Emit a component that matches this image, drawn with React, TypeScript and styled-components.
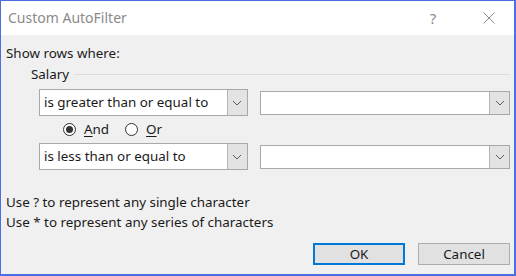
import React from "react";
import styled, { createGlobalStyle } from "styled-components";

const Global = createGlobalStyle`
  html, body { margin: 0; padding: 0; background: #ffffff; }
  * { box-sizing: border-box; }
`;

const Window = styled.div`
  width: 516px;
  height: 276px;
  border: 1px solid #4a6fe3;
  border-right-width: 2px;
  border-bottom-width: 2px;
  display: flex;
  flex-direction: column;
  font-family: "Noto Sans", "Open Sans", sans-serif;
  font-size: 13.4px;
  color: #1a1a1a;
  overflow: hidden;
`;

const TitleBar = styled.div`
  height: 34px;
  background: #ffffff;
  display: flex;
  align-items: center;
  padding-left: 7px;
`;

const Title = styled.div`
  flex: 1;
  font-size: 14px;
  color: #8a8a8a;
  padding-bottom: 2px;
`;

const TitleButton = styled.div<{ $w: number }>`
  width: ${(p) => p.$w}px;
  height: 34px;
  display: flex;
  align-items: center;
  justify-content: center;
  color: #8a8a8a;
  font-size: 15px;
`;

const Body = styled.div`
  flex: 1;
  background: #f0f0f0;
  display: flex;
  flex-direction: column;
  padding: 10px 4px 0 5px;
`;

const Label = styled.div`
  line-height: 16px;
  height: 16px;
`;

const GroupHeader = styled.div`
  display: flex;
  align-items: center;
  margin-top: 5px;
  padding-left: 25px;
  height: 16px;
`;

const GroupLine = styled.div`
  flex: 1;
  height: 1px;
  background: #dcdcdc;
  margin-left: 5px;
`;

const ComboRow = styled.div<{ $top: number }>`
  display: flex;
  align-items: center;
  margin-top: ${(p) => p.$top}px;
  padding-left: 33px;
`;

const Combo = styled.div<{ $w: number; $h: number; $gap?: number }>`
  width: ${(p) => p.$w}px;
  height: ${(p) => p.$h}px;
  margin-left: ${(p) => p.$gap ?? 0}px;
  display: flex;
  background: #ffffff;
  border: 1px solid #a8a8a8;
`;

const ComboText = styled.div`
  flex: 1;
  display: flex;
  align-items: center;
  padding-left: 4px;
  padding-bottom: 1px;
  white-space: nowrap;
  overflow: hidden;
`;

const DropButton = styled.div`
  width: 20px;
  background: #e3e3e3;
  border-left: 1px solid #b4b4b4;
  display: flex;
  align-items: center;
  justify-content: center;
`;

const RadioRow = styled.div`
  display: flex;
  align-items: center;
  height: 16px;
  margin-top: 5px;
  padding-left: 57px;
`;

const RadioItem = styled.label<{ $gap?: number }>`
  display: flex;
  align-items: center;
  margin-left: ${(p) => p.$gap ?? 0}px;
`;

const RadioCircle = styled.span<{ $checked: boolean }>`
  width: 13px;
  height: 13px;
  border-radius: 50%;
  border: 1px solid #333333;
  background: #ffffff;
  display: flex;
  align-items: center;
  justify-content: center;
  margin-right: 8px;
  &::after {
    content: "";
    width: 7px;
    height: 7px;
    border-radius: 50%;
    background: ${(p) => (p.$checked ? "#333333" : "transparent")};
  }
`;

const Underline = styled.span`
  text-decoration: underline;
  text-underline-offset: 2px;
`;

const Help = styled.div`
  margin-top: 22px;
  line-height: 20px;
`;

const ButtonRow = styled.div`
  display: flex;
  justify-content: flex-end;
  gap: 13px;
  margin-top: 11px;
`;

const Button = styled.div<{ $default?: boolean }>`
  width: 92px;
  height: 22px;
  background: #e1e1e1;
  border: ${(p) => (p.$default ? "2px solid #0078d7" : "1px solid #adadad")};
  display: flex;
  align-items: center;
  justify-content: center;
  padding-bottom: 1px;
`;

const Chevron = () => (
  <svg width="10" height="6" viewBox="0 0 10 6">
    <path d="M1 1 L5 5 L9 1" fill="none" stroke="#5a5a5a" strokeWidth="1" />
  </svg>
);

export default function App() {
  return (
    <>
      <Global />
      <Window>
        <TitleBar>
          <Title>Custom AutoFilter</Title>
          <TitleButton $w={62}>?</TitleButton>
          <TitleButton $w={50}>
            <svg width="12" height="12" viewBox="0 0 12 12">
              <path d="M0.5 0.5 L11.5 11.5 M11.5 0.5 L0.5 11.5" stroke="#8a8a8a" strokeWidth="1" />
            </svg>
          </TitleButton>
        </TitleBar>
        <Body>
          <Label>Show rows where:</Label>
          <GroupHeader>
            Salary
            <GroupLine />
          </GroupHeader>
          <ComboRow $top={7}>
            <Combo $w={209} $h={27}>
              <ComboText>is greater than or equal to</ComboText>
              <DropButton><Chevron /></DropButton>
            </Combo>
            <Combo $w={251} $h={24} $gap={12}>
              <ComboText />
              <DropButton><Chevron /></DropButton>
            </Combo>
          </ComboRow>
          <RadioRow>
            <RadioItem>
              <RadioCircle $checked={true} />
              <Underline>A</Underline>nd
            </RadioItem>
            <RadioItem $gap={16}>
              <RadioCircle $checked={false} />
              <Underline>O</Underline>r
            </RadioItem>
          </RadioRow>
          <ComboRow $top={6}>
            <Combo $w={209} $h={27}>
              <ComboText>is less than or equal to</ComboText>
              <DropButton><Chevron /></DropButton>
            </Combo>
            <Combo $w={251} $h={24} $gap={12}>
              <ComboText />
              <DropButton><Chevron /></DropButton>
            </Combo>
          </ComboRow>
          <Help>
            Use ? to represent any single character
            <br />
            Use * to represent any series of characters
          </Help>
          <ButtonRow>
            <Button $default>OK</Button>
            <Button>Cancel</Button>
          </ButtonRow>
        </Body>
      </Window>
    </>
  );
}
